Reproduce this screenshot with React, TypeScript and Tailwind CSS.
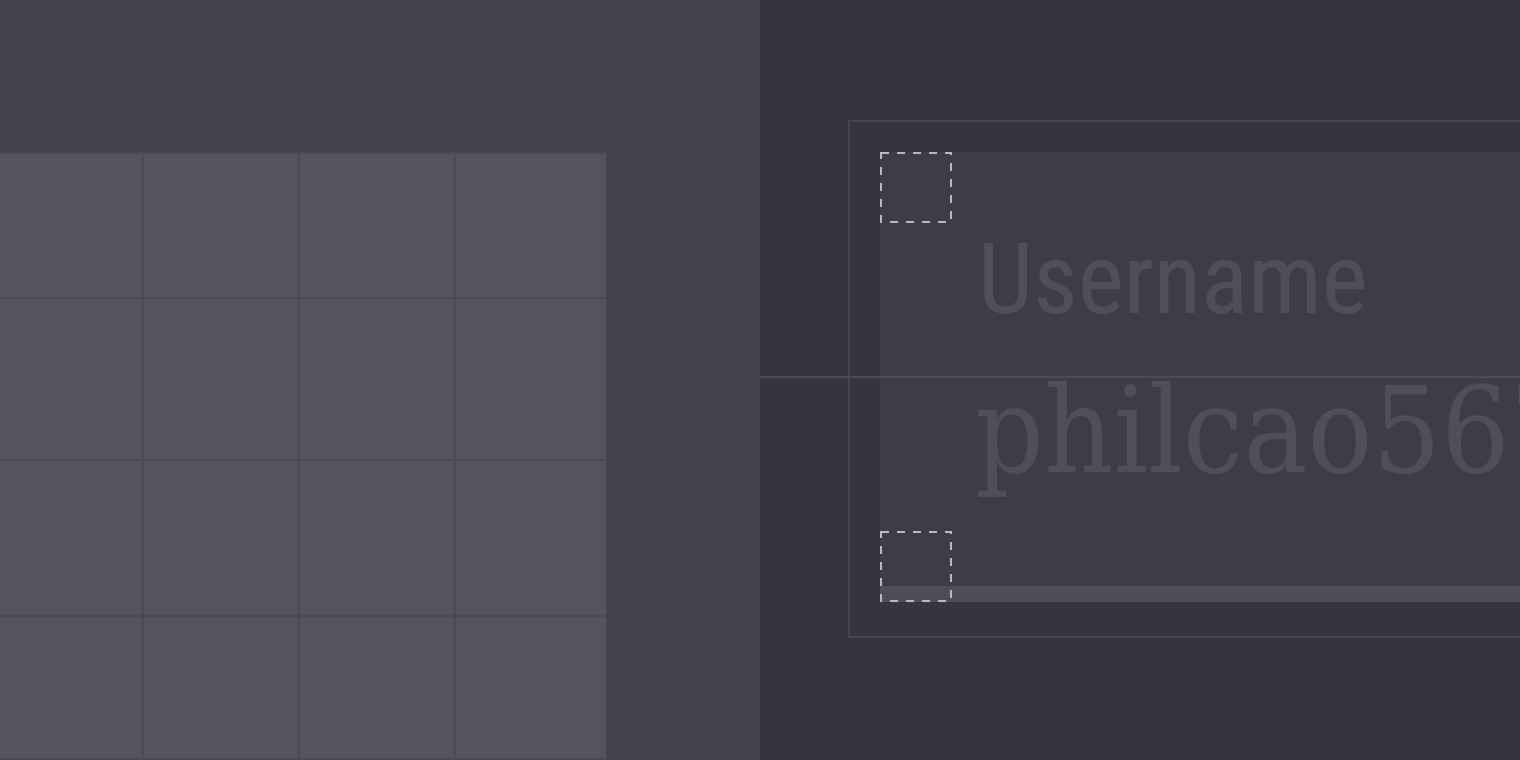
import React from 'react'

const cols = [0, 1, 2, 3]
const rows = [0, 1, 2, 3]

function Swatches() {
  // left half: grid of tiles, first column runs off the edge
  return (
    <div className="h-full w-[760px] overflow-hidden bg-[#45434f] pt-[152px]">
      <div className="grid w-[606px] grid-cols-[142px_154px_154px_150px] grid-rows-[143px_160px_154px_141px] gap-[2px] bg-[#4a4954] py-[2px]">
        {rows.map(r =>
          cols.map(c => <div key={`${r}-${c}`} className="bg-[#54535f]" />),
        )}
      </div>
    </div>
  )
}

function Marker() {
  return (
    <svg width="72" height="71" viewBox="0 0 72 71" className="relative z-10 block shrink-0">
      <rect x="1" y="1" width="70" height="69" fill="none" stroke="#b8b8bd" strokeWidth="2" strokeDasharray="8 8" />
    </svg>
  )
}

function FieldPreview() {
  return (
    <div className="relative h-full w-[760px] overflow-hidden bg-[#36353f] pl-[88px] pt-[120px]">
      <div className="w-[900px] border-2 border-[#45444e] pb-[34px] pl-[30px] pt-[30px]">
        <div className="relative flex h-[450px] flex-col bg-[#3e3d47]">
          <Marker />
          <div className="pl-[98px] text-[#4f4e59]">
            <div
              className="mt-[8px] text-[98px] font-normal leading-none"
              style={{ fontFamily: '"Roboto Condensed", Roboto, sans-serif' }}
            >
              Username
            </div>
            <div
              className="-ml-[3px] mt-[42px] whitespace-nowrap text-[120px] leading-none"
              style={{ fontFamily: '"DejaVu Serif Condensed", "DejaVu Serif", serif' }}
            >
              philcao567
            </div>
          </div>
          <div className="mt-auto">
            <Marker />
          </div>
          <div className="absolute bottom-0 left-0 right-0 h-[16px] bg-[#4f4e58]" />
        </div>
      </div>
      {/* baseline guide */}
      <div className="absolute left-0 right-0 top-[376px] z-20 h-[2px] bg-[#4d4c56]" />
    </div>
  )
}

export default function App() {
  return (
    <div className="flex h-[760px] w-[1520px] overflow-hidden">
      <Swatches />
      <FieldPreview />
    </div>
  )
}
